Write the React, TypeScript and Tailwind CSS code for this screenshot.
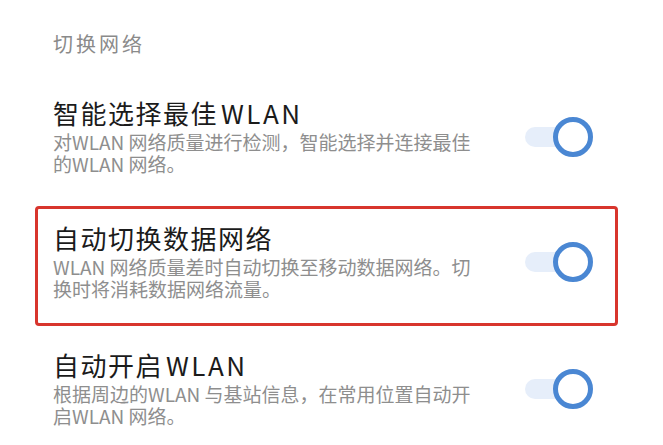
import React from "react";

function Toggle() {
  return (
    <div className="relative w-[68px] h-[40px] shrink-0">
      <div className="absolute left-0 top-[10px] w-[50px] h-[20px] rounded-full bg-[#e6eefa]" />
      <div className="absolute right-0 top-0 w-[40px] h-[40px] rounded-full border-[5px] border-[#4a87d3] bg-white" />
    </div>
  );
}

function Row({
  title,
  latin,
  lines,
  highlight,
}: {
  title: string;
  latin?: string;
  lines: [string, string];
  highlight?: boolean;
}) {
  return (
    <div
      className={
        "flex items-center justify-between rounded-[4px] border-[3px] pl-[15px] pr-[22px] " +
        (highlight ? "border-[#d8352d] pt-[14px] pb-[23px]" : "border-transparent")
      }
    >
      <div className="flex flex-col">
        <div className="text-[26px] leading-[30px] tracking-[1.5px] text-[#1b1b1b] whitespace-nowrap">
          {title}
          {latin ? <span className="ml-[3px] tracking-[2.5px]">{latin}</span> : null}
        </div>
        <p className="mt-[3px] text-[19px] leading-[22px] text-[#8e8e8e] whitespace-nowrap">
          {lines[0]}
          <br />
          {lines[1]}
        </p>
      </div>
      <Toggle />
    </div>
  );
}

export default function App() {
  return (
    <div
      className="w-[663px] h-[445px] bg-white overflow-hidden pl-[35px] pr-[45px]"
      style={{ fontFamily: '"Noto Sans CJK SC", "Noto Sans", sans-serif' }}
    >
      <div className="pl-[18px] pt-[30px] text-[20px] leading-[28px] tracking-[3px] text-[#8a8a8a]">
        切换网络
      </div>
      <div className="mt-[37px]">
        <Row
          title="智能选择最佳"
          latin="WLAN"
          lines={["对WLAN 网络质量进行检测，智能选择并连接最佳", "的WLAN 网络。"]}
        />
      </div>
      <div className="mt-[28px]">
        <Row
          highlight
          title="自动切换数据网络"
          lines={["WLAN 网络质量差时自动切换至移动数据网络。切", "换时将消耗数据网络流量。"]}
        />
      </div>
      <div className="mt-[21px]">
        <Row
          title="自动开启"
          latin="WLAN"
          lines={["根据周边的WLAN 与基站信息，在常用位置自动开", "启WLAN 网络。"]}
        />
      </div>
    </div>
  );
}
